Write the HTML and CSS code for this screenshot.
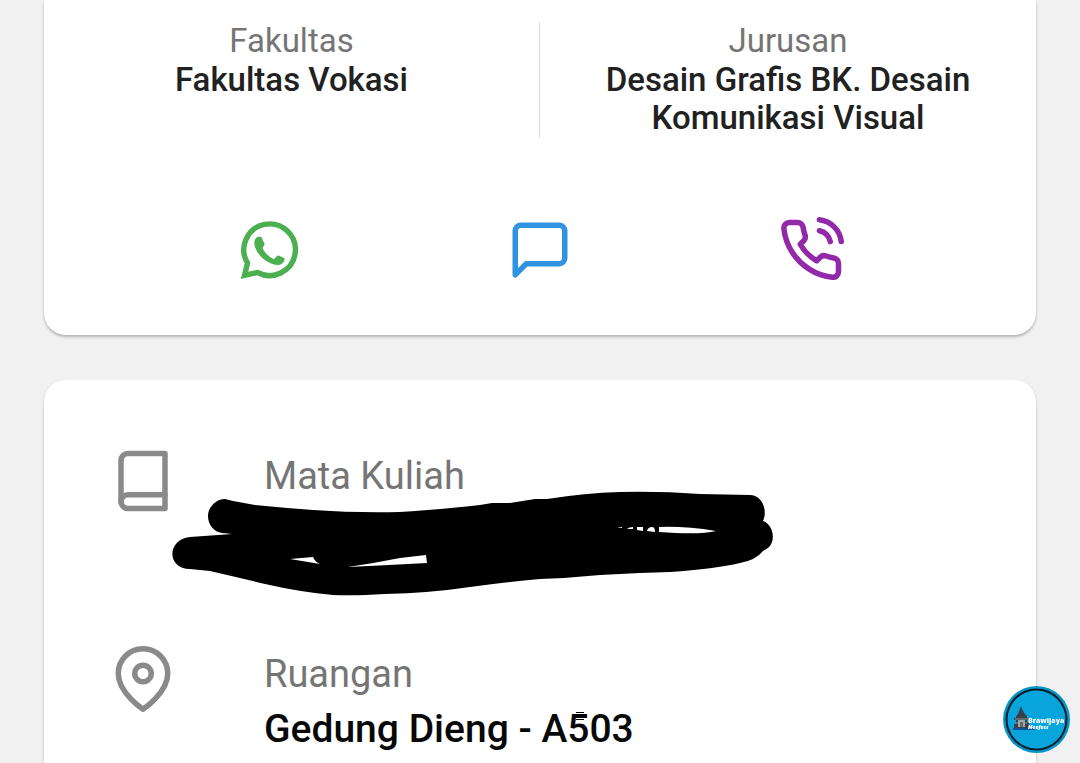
FILE: index.html
```html
<!doctype html>
<html lang="id">
<head>
    <meta charset="UTF-8">
    <meta name="viewport" content="width=device-width, initial-scale=1.0">
    <title>Detail Kelas</title>
    <link rel="stylesheet" href="styles.css">
</head>
<body>
<main>
    <section class="card profile">
        <dl class="info">
            <div class="info-item">
                <dt>Fakultas</dt>
                <dd>Fakultas Vokasi</dd>
            </div>
            <div class="info-item">
                <dt>Jurusan</dt>
                <dd>Desain Grafis BK. Desain Komunikasi Visual</dd>
            </div>
        </dl>
        <nav class="actions">
            <a class="whatsapp" href="#whatsapp" aria-label="WhatsApp">
                <svg class="icon" viewBox="0 0 66 66">
                    <path d="M11.500 46A25.800 25.800 0 1 1 21.500 55.500L8.500 58.500Z" stroke-width="5.400" stroke-linejoin="miter"/>
                    <path d="M20 21C22 19 25.500 19.500 26 21L28.500 27C29 28.500 26.500 30 26.500 31C28.500 35.500 33 40 37.500 42C39 42.500 40.500 38 42.500 38.500L48 41C49.500 42 48 45.500 45.500 47C42 49 37 47.500 33 45.500C26 42 21 36 19 30C18 27 18 23.500 20 21Z" fill="currentColor" stroke="none"/>
                </svg>
            </a>
            <a class="message" href="#message" aria-label="Pesan">
                <svg class="icon" viewBox="0 0 24 24">
                    <path d="M21 15a2 2 0 0 1-2 2H7l-4 4V5a2 2 0 0 1 2-2h14a2 2 0 0 1 2 2z"/>
                </svg>
            </a>
            <a class="phone" href="#phone" aria-label="Telepon">
                <svg class="icon" viewBox="0 0 24 24">
                    <path d="M15.050 5A5 5 0 0 1 19 8.950M15.050 1A9 9 0 0 1 23 8.940m-1 7.980v3a2 2 0 0 1-2.180 2 19.790 19.790 0 0 1-8.630-3.070 19.500 19.500 0 0 1-6-6 19.790 19.790 0 0 1-3.070-8.670A2 2 0 0 1 4.110 2h3a2 2 0 0 1 2 1.720 12.840 12.840 0 0 0 .7 2.810 2 2 0 0 1-.45 2.110L8.090 9.910a16 16 0 0 0 6 6l1.270-1.270a2 2 0 0 1 2.110-.45 12.840 12.840 0 0 0 2.810.7A2 2 0 0 1 22 16.920z"/>
                </svg>
            </a>
        </nav>
    </section>

    <section class="card course">
        <div class="row">
            <svg class="icon" viewBox="0 0 24 24">
                <path d="M4 19.500A2.500 2.500 0 0 1 6.500 17H20"/>
                <path d="M6.500 2H20v20H6.500A2.500 2.500 0 0 1 4 19.500v-15A2.500 2.500 0 0 1 6.500 2z"/>
            </svg>
            <div class="row-text">
                <h2>Mata Kuliah</h2>
            </div>
            <!-- course name is blacked out -->
            <svg class="scribble" viewBox="170 490 604 106">
                <path fill-rule="evenodd" d="M208 516C208 507 216 499 225 499L233 501L255 505Q285 508 313 510Q355 513 400 512Q435 510 480 505L492 503L510 503L535 499L547 499Q585 493 620 492Q660 491 700 494L750 495C762 495 768 510 763 521C774 525 776 542 768 548L763 551Q756 560 740 563Q715 569 670 572L640 573L600 575Q570 578 540 579Q505 582 470 587Q430 593 385 594Q355 596 333 595Q300 592 265 584L210 571L190 569C166 569 167 539 190 537L232 534L222 533C214 532 208 525 208 516Z
                M290 559L313 557Q315 562 320 564Z
                M348 567Q375 563 400 558L426 555L427 563Q390 565 348 567Z
                M617 527L622 527L622 528Z
                M627 529Q629 527 633 527L633 529Z
                M637 527L643 527L643 531L637 530Z
                M647 531Q648 527 652 527Q655 527 655 532Z
                M659 527Q685 526 716 531Q700 535 659 532Z"/>
            </svg>
        </div>
        <div class="row">
            <svg class="icon" viewBox="0 0 24 24">
                <path d="M21 10c0 7-9 13-9 13s-9-6-9-13a9 9 0 0 1 18 0z"/>
                <circle cx="12" cy="10" r="3"/>
            </svg>
            <div class="row-text">
                <h2>Ruangan</h2>
                <p>Gedung Dieng - A503</p>
            </div>
        </div>
    </section>
</main>

<a class="badge" href="#menfess" aria-label="Brawijaya Menfess">
    <svg viewBox="0 0 67 67">
        <circle cx="33.500" cy="33.500" r="33.500" fill="#0795c8"/>
        <circle cx="33.500" cy="33.500" r="31" fill="#06202b"/>
        <circle cx="33.500" cy="33.500" r="29" fill="#08a5dc"/>
        <path d="M10 42H33L31 44H10Z" fill="#09529a"/>
        <path d="M18 20L20 25L22 28L24 30V32H26V34H24V36H26V42H11V38H13V34H11V32H13V30L15 28Z" fill="#38414b"/>
        <path d="M12 33H25M13 37H24" stroke="#8b9297"/>
        <path d="M15 34H22V41H15Z" fill="#a3a4a5"/>
        <path d="M17 36H20V41H17Z" fill="#666b70"/>
        <text x="25" y="37" class="badge-name">Brawijaya</text>
        <text x="25" y="43" class="badge-sub">Menfess</text>
    </svg>
</a>
<svg class="cursor" viewBox="0 0 11 8">
    <path d="M0 .5H8M0 3.500H11M0 5.500H8M0 7.500H8"/>
</svg>
</body>
</html>
```
FILE: styles.css
```css
* {
    margin: 0;
    padding: 0;
    box-sizing: border-box;
}

body {
    background: #f1f1f1;
    font-family: Roboto, "Liberation Sans", sans-serif;
    color: #212121;
}

main {
    display: flex;
    flex-direction: column;
    gap: 45px;
    min-height: 100vh;
    padding: 0 44px;
}

.card {
    background: #fff;
    border-radius: 22px;
    box-shadow: 0 2px 3px rgba(0, 0, 0, 0.26);
}

.icon {
    display: block;
    flex: none;
    width: 66px;
    height: 66px;
    fill: none;
    stroke: currentColor;
    stroke-width: 2;
    stroke-linecap: round;
    stroke-linejoin: round;
}

.profile {
    border-top-left-radius: 0;
    border-top-right-radius: 0;
    padding: 22px 0 52px;
}

.info {
    display: grid;
    grid-template-columns: 1fr 1fr;
    font-size: 33px;
    line-height: 38px;
    text-align: center;
}

.info-item {
    min-height: 116px;
    padding: 0 48px;
}

.info-item:first-child {
    border-right: 1px solid #ddd;
}

.info dt {
    color: #757575;
}

.info dd {
    margin-top: 1px;
    font-weight: 500;
}

.actions {
    display: grid;
    grid-template-columns: repeat(3, 1fr);
    justify-items: center;
    margin-top: 79px;
    padding: 0 90px;
}

.whatsapp {
    color: #4caf50;
}

.message {
    color: #3094e0;
}

.phone {
    color: #9229a9;
}

.course {
    flex: 1;
    border-bottom-left-radius: 0;
    border-bottom-right-radius: 0;
    padding: 68px 66px 0;
}

.row {
    position: relative;
    display: flex;
    gap: 88px;
    min-height: 198px;
    color: #8a8a8a;
}

.row:last-child {
    min-height: 115px;
}

.row-text {
    padding-top: 5px;
    line-height: 46px;
}

.row-text h2 {
    font-size: 38px;
    font-weight: 400;
    color: #757575;
}

.row-text p {
    margin-top: 9px;
    font-size: 39px;
    font-weight: 500;
    color: #080808;
}

.scribble {
    position: absolute;
    left: 60px;
    top: 42px;
    width: 604px;
    height: 106px;
}

.badge {
    position: fixed;
    right: 10px;
    bottom: 10px;
    width: 67px;
    height: 67px;
}

.badge svg {
    display: block;
}

.badge text {
    fill: #fff;
    font-family: "Open Sans", sans-serif;
    font-weight: 800;
}

.badge-name {
    font-size: 7px;
}

.badge-sub {
    font-size: 5px;
    font-style: italic;
}

.cursor {
    position: absolute;
    left: 576px;
    top: 712px;
    width: 11px;
    height: 8px;
    stroke: #000;
}
```
